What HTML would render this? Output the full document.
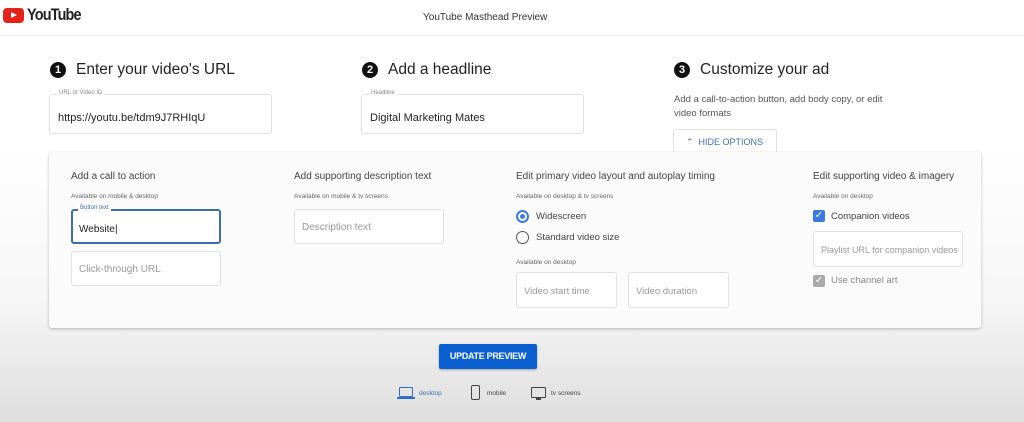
<!DOCTYPE html>
<html><head><meta charset="utf-8"><style>
*{box-sizing:border-box;margin:0;padding:0}
body{width:1024px;height:422px;overflow:hidden;font-family:"Liberation Sans",sans-serif;color:#333;background:linear-gradient(#fff 0,#fff 150px,#f6f6f6 300px,#dedede 422px);position:relative}
.a{position:absolute}
.hdr{left:0;top:0;width:1024px;height:36px;border-bottom:1px solid #eee;background:#fff}
.num{display:inline-block;width:16px;height:16px;border-radius:50%;background:#111;color:#fff;font-size:11px;font-weight:bold;text-align:center;line-height:16px;vertical-align:middle;margin-right:10px}
h2{font-weight:normal;font-size:15.5px;color:#222;position:absolute;white-space:nowrap}
.box{position:absolute;border:1px solid #e2e2e2;border-radius:3px;background:#fff;font-size:11px;color:#222}
.lbl{position:absolute;top:-5px;left:7px;background:#fff;padding:0 2px;font-size:6px;color:#888}
.ph{color:#999;font-size:10px}
.t{position:absolute;font-size:10px;color:#444;white-space:nowrap}
.s{position:absolute;font-size:6.5px;color:#666;white-space:nowrap}
</style></head><body>
<div class="a hdr"></div>
<div class="a" style="left:3px;top:8px;width:21px;height:15px;background:#e62117;border-radius:4px"></div>
<div class="a" style="left:11px;top:12px;width:0;height:0;border-left:6px solid #fff;border-top:3.5px solid transparent;border-bottom:3.5px solid transparent"></div>
<div class="a" style="left:27px;top:5px;font-size:17px;font-weight:bold;letter-spacing:-1px;color:#222;transform:scaleX(.85);transform-origin:left">YouTube</div>
<div class="a" style="left:423px;top:12px;font-size:10px;color:#333">YouTube Masthead Preview</div>

<h2 style="left:50px;top:61px"><span class="num">1</span>Enter your video's URL</h2>
<h2 style="left:362px;top:61px"><span class="num">2</span>Add a headline</h2>
<h2 style="left:674px;top:61px"><span class="num">3</span>Customize your ad</h2>

<div class="box" style="left:49px;top:94px;width:223px;height:40px"><span class="lbl">URL or Video ID</span><span class="a" style="left:8px;top:17px">https://youtu.be/tdm9J7RHIqU</span></div>
<div class="box" style="left:361px;top:94px;width:223px;height:40px"><span class="lbl">Headline</span><span class="a" style="left:8px;top:17px">Digital Marketing Mates</span></div>
<div class="a" style="left:674px;top:93px;font-size:9.5px;color:#555;line-height:14px;width:230px">Add a call-to-action button, add body copy, or edit video formats</div>
<div class="box" style="left:673px;top:129px;width:104px;height:26px;border-bottom:none;border-radius:3px 3px 0 0"><span class="a" style="left:12px;top:7px;font-size:9px;color:#3d6fb6">&#8963;&nbsp;&nbsp;HIDE OPTIONS</span></div>

<div class="a" style="left:49px;top:152px;width:932px;height:176px;background:#fbfbfb;border-radius:3px;box-shadow:0 1px 3px rgba(0,0,0,.25)"></div>

<div class="t" style="left:71px;top:171px">Add a call to action</div>
<div class="s" style="left:71px;top:193px">Available on mobile &amp; desktop</div>
<div class="box" style="left:71px;top:209px;width:150px;height:35px;border:2px solid #3b6db3"><span class="lbl" style="color:#3b6db3;left:5px;top:-6px">Button text</span><span class="a" style="left:6px;top:13px;font-size:10px">Website|</span></div>
<div class="box" style="left:71px;top:251px;width:150px;height:35px"><span class="a ph" style="left:7px;top:12px">Click-through URL</span></div>

<div class="t" style="left:294px;top:171px">Add supporting description text</div>
<div class="s" style="left:294px;top:193px">Available on mobile &amp; tv screens</div>
<div class="box" style="left:294px;top:209px;width:150px;height:35px"><span class="a ph" style="left:7px;top:12px">Description text</span></div>

<div class="t" style="left:516px;top:171px">Edit primary video layout and autoplay timing</div>
<div class="s" style="left:516px;top:193px">Available on desktop &amp; tv screens</div>
<div class="a" style="left:516px;top:210px;width:13px;height:13px;border:2px solid #3b7be0;border-radius:50%"><div class="a" style="left:2px;top:2px;width:5px;height:5px;border-radius:50%;background:#3b7be0"></div></div>
<div class="t" style="left:536px;top:211px;font-size:9.5px">Widescreen</div>
<div class="a" style="left:516px;top:231px;width:13px;height:13px;border:1.5px solid #555;border-radius:50%"></div>
<div class="t" style="left:536px;top:232px;font-size:9.5px">Standard video size</div>
<div class="s" style="left:516px;top:259px">Available on desktop</div>
<div class="box" style="left:516px;top:272px;width:101px;height:36px"><span class="a ph" style="left:7px;top:13px;font-size:9.5px">Video start time</span></div>
<div class="box" style="left:628px;top:272px;width:101px;height:36px"><span class="a ph" style="left:7px;top:13px;font-size:9.5px">Video duration</span></div>

<div class="t" style="left:813px;top:171px">Edit supporting video &amp; imagery</div>
<div class="s" style="left:813px;top:193px">Available on desktop</div>
<div class="a" style="left:813px;top:210px;width:12px;height:12px;background:#3b7be0;border-radius:2px;color:#fff;font-size:10px;line-height:12px;text-align:center">✓</div>
<div class="t" style="left:831px;top:211px;font-size:9.5px">Companion videos</div>
<div class="box" style="left:813px;top:231px;width:150px;height:36px"><span class="a ph" style="left:7px;top:13px;font-size:9px">Playlist URL for companion videos</span></div>
<div class="a" style="left:813px;top:275px;width:12px;height:12px;background:#aaa;border-radius:2px;color:#fff;font-size:10px;line-height:12px;text-align:center">✓</div>
<div class="t" style="left:831px;top:275px;font-size:9.5px;color:#888">Use channel art</div>

<div class="a" style="left:439px;top:344px;width:98px;height:25px;background:#0b5fd1;border-radius:2px;box-shadow:0 1px 2px rgba(0,0,0,.3);color:#fff;font-size:9px;font-weight:bold;text-align:center;line-height:25px;letter-spacing:-.3px">UPDATE PREVIEW</div>

<div class="a" style="left:399px;top:387px;width:14px;height:10px;border:1.5px solid #2f6fc9;border-radius:1px"></div>
<div class="a" style="left:397px;top:397px;width:18px;height:2px;background:#2f6fc9"></div>
<div class="a" style="left:419px;top:390px;font-size:6.5px;color:#3d6fb6">desktop</div>
<div class="a" style="left:471px;top:385px;width:9px;height:15px;border:1.5px solid #444;border-radius:2px"></div>
<div class="a" style="left:487px;top:390px;font-size:6.5px;color:#444">mobile</div>
<div class="a" style="left:531px;top:387px;width:15px;height:11px;border:1.5px solid #444;border-radius:1px"></div>
<div class="a" style="left:536px;top:398px;width:5px;height:2px;background:#444"></div>
<div class="a" style="left:551px;top:390px;font-size:6.5px;color:#444">tv screens</div>
</body></html>
